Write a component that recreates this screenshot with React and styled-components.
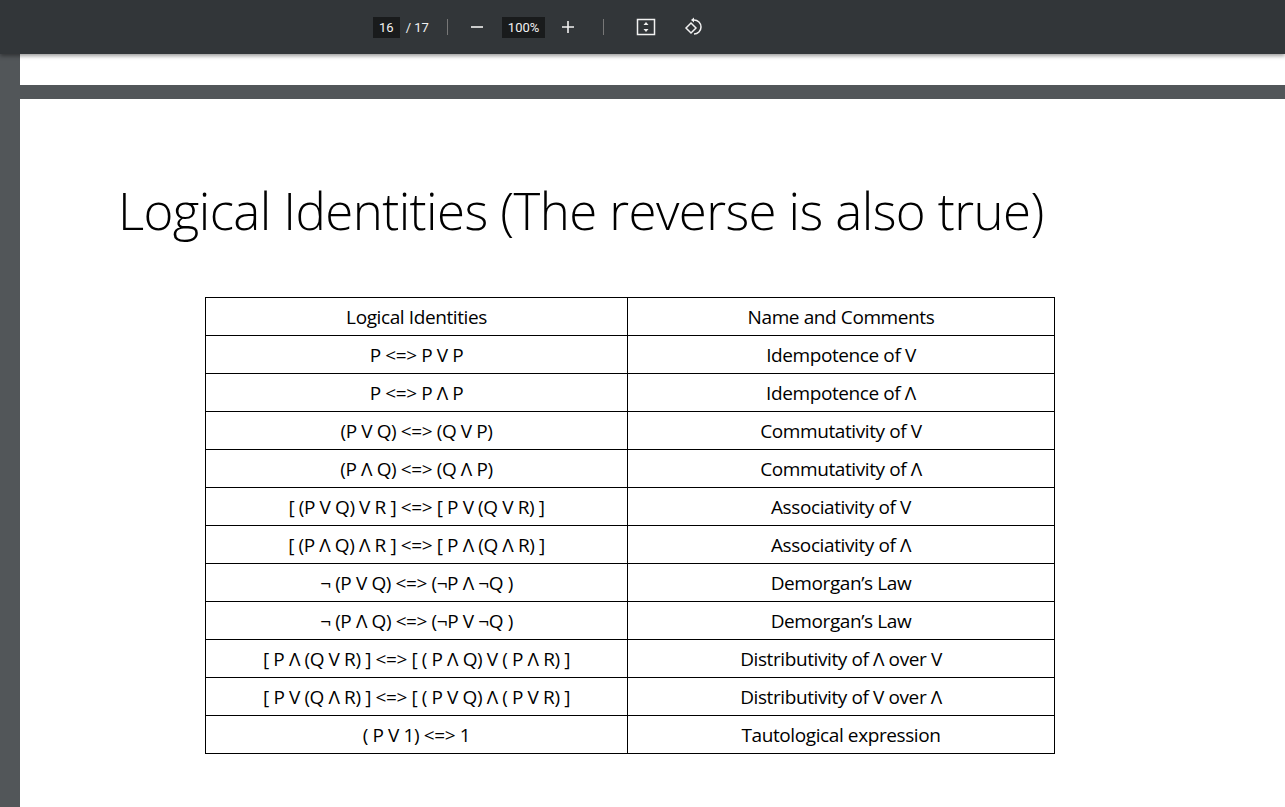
import React from "react";
import styled, { createGlobalStyle } from "styled-components";

const G = createGlobalStyle`
  html,body{margin:0;padding:0;background:#525659;overflow:hidden;}
  body{font-family:"Open Sans",sans-serif;}
`;
const Wrap = styled.div`width:1285px;height:807px;display:flex;flex-direction:column;`;
const Bar = styled.div`height:54px;background:#323639;display:flex;align-items:center;padding-left:373px;gap:0;color:#f1f1f1;font-family:"Roboto",sans-serif;font-size:13px;box-shadow:0 2px 4px rgba(0,0,0,.4);z-index:1;`;
const Field = styled.span`background:#191b1c;padding:3px 6px;`;
const Sep = styled.span`width:1px;height:16px;background:#777;margin:0 ${p=>p.m||12}px;`;
const Btn = styled.span`display:flex;align-items:center;margin:0 ${p=>p.m||8}px;`;
const Viewer = styled.div`flex:1;display:flex;flex-direction:column;padding-left:20px;gap:14px;`;
const Prev = styled.div`height:31px;background:#fff;`;
const Page = styled.div`flex:1;background:#fff;padding:${"170px"} 0 0 118px;position:relative;`;
const Title = styled.h1`margin:0;position:absolute;top:76px;left:98px;font-weight:300;font-size:51px;color:#000;font-family:"Open Sans",sans-serif;letter-spacing:-0.6px;`;
const Table = styled.table`position:absolute;top:198px;left:185px;border-collapse:collapse;font-family:"Open Sans",sans-serif;font-size:19px;color:#000;`;
const Td = styled.td`border:1.5px solid #000;height:37px;padding:0;text-align:center;width:${p=>p.w}px;letter-spacing:-0.4px;`;

const rows = [
 ["Logical Identities","Name and Comments"],
 ["P <=> P V P","Idempotence of V"],
 ["P <=> P Λ P","Idempotence of Λ"],
 ["(P V Q) <=> (Q V P)","Commutativity of V"],
 ["(P Λ Q) <=> (Q Λ P)","Commutativity of Λ"],
 ["[ (P V Q) V R ] <=> [ P V (Q V R) ]","Associativity of V"],
 ["[ (P Λ Q) Λ R ] <=> [ P Λ (Q Λ R) ]","Associativity of Λ"],
 ["¬ (P V Q) <=> (¬P Λ ¬Q )","Demorgan’s Law"],
 ["¬ (P Λ Q) <=> (¬P V ¬Q )","Demorgan’s Law"],
 ["[ P Λ (Q V R) ] <=> [ ( P Λ Q) V ( P Λ R) ]","Distributivity of Λ over V"],
 ["[ P V (Q Λ R) ] <=> [ ( P V Q) Λ ( P V R) ]","Distributivity of V over Λ"],
 ["( P  V 1) <=> 1","Tautological expression"],
];

export default function App(){
  return <Wrap><G/>
    <Bar>
      <Field>16</Field><span style={{marginLeft:6}}>/ 17</span>
      <Sep m={18}/>
      <Btn m={4}><svg width="14" height="14"><path d="M1 7h12" stroke="#f1f1f1" strokeWidth="1.6"/></svg></Btn>
      <Field style={{marginLeft:14}}>100%</Field>
      <Btn m={16}><svg width="14" height="14"><path d="M1 7h12M7 1v12" stroke="#f1f1f1" strokeWidth="1.6"/></svg></Btn>
      <Sep m={0}/>
      <Btn m={20}><svg width="20" height="18" viewBox="0 0 20 18"><rect x="1.5" y="1.5" width="17" height="15" fill="none" stroke="#f1f1f1" strokeWidth="1.5"/><path d="M10 4l-2.5 3h5zM10 14l-2.5-3h5z" fill="#f1f1f1"/></svg></Btn>
      <Btn m={0}><svg width="20" height="20" viewBox="0 0 20 20"><path d="M2 11l5-5 5 5-5 5z" fill="none" stroke="#f1f1f1" strokeWidth="1.5"/><path d="M10 3a7 7 0 1 1 0 14" fill="none" stroke="#f1f1f1" strokeWidth="1.5"/><path d="M10 0.5v5l-3-2.5z" fill="#f1f1f1"/></svg></Btn>
    </Bar>
    <Viewer>
      <Prev/>
      <Page>
        <Title>Logical Identities (The reverse is also true)</Title>
        <Table><tbody>{rows.map((r,i)=><tr key={i}><Td w={421}>{r[0]}</Td><Td w={426}>{r[1]}</Td></tr>)}</tbody></Table>
      </Page>
    </Viewer>
  </Wrap>;
}
